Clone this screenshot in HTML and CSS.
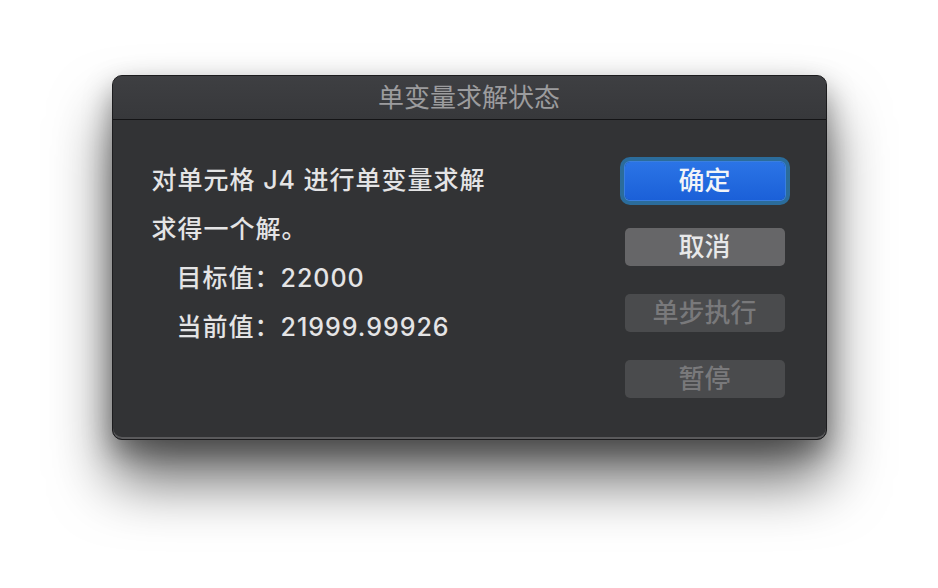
FILE: index.html
```html
<!DOCTYPE html>
<html lang="zh-CN">
<head>
  <meta charset="UTF-8">
  <title>单变量求解状态</title>
  <link rel="stylesheet" href="styles.css">
</head>
<body>
  <div class="dialog">
    <div class="titlebar">单变量求解状态</div>
    <div class="content">
      <div class="message">
        <div class="line">对单元格 J4 进行单变量求解</div>
        <div class="line">求得一个解。</div>
        <div class="line indent">目标值：22000</div>
        <div class="line indent">当前值：21999.99926</div>
      </div>
      <div class="actions">
        <button class="btn primary">确定</button>
        <button class="btn">取消</button>
        <button class="btn disabled">单步执行</button>
        <button class="btn disabled">暂停</button>
      </div>
    </div>
  </div>
</body>
</html>
```

FILE: styles.css
```css
body {
  margin: 0;
  background: #ffffff;
  font-family: Inter, "Noto Sans CJK SC", sans-serif;
  display: flex;
  justify-content: center;
  padding-top: 75px;
  height: 513px;
}

.dialog {
  width: 715px;
  height: 365px;
  box-sizing: border-box;
  background: #323335;
  border-radius: 10px;
  border: 1px solid #1c1c1e;
  box-shadow: inset 0 -2px 0 #5a5a5c, 0 40px 60px rgba(0, 0, 0, 0.6), 0 12px 28px rgba(0, 0, 0, 0.35);
  overflow: hidden;
  display: flex;
  flex-direction: column;
}

.titlebar {
  height: 43px;
  background: linear-gradient(#3e3f42, #37383b);
  border-bottom: 1px solid #141416;
  color: #9c9c9e;
  font-size: 26px;
  line-height: 43px;
  text-align: center;
}

.content {
  flex: 1;
  display: flex;
  justify-content: space-between;
  padding: 35px 41px 0 39px;
}

.message {
  color: #e4e4e5;
  font-size: 25px;
  font-weight: 500;
  letter-spacing: 1px;
}

.line {
  line-height: 50px;
  height: 49px;
  white-space: nowrap;
}

.indent {
  padding-left: 25px;
}

.actions {
  display: flex;
  flex-direction: column;
  gap: 28px;
  padding-top: 7px;
}

.btn {
  width: 160px;
  height: 38px;
  border: none;
  border-radius: 5px;
  background: #666668;
  color: #e8e8e9;
  font-family: Inter, "Noto Sans CJK SC", sans-serif;
  font-size: 26px;
  font-weight: 500;
  line-height: 38px;
  padding: 0;
}

.primary {
  background: linear-gradient(#2b74e6, #1b60d8);
  color: #f2f4f8;
  box-shadow: 0 0 0 1px #3a7fe0, 0 0 0 5px #2b6c9b;
}

.disabled {
  background: #4a4b4d;
  color: #79797b;
}
```
